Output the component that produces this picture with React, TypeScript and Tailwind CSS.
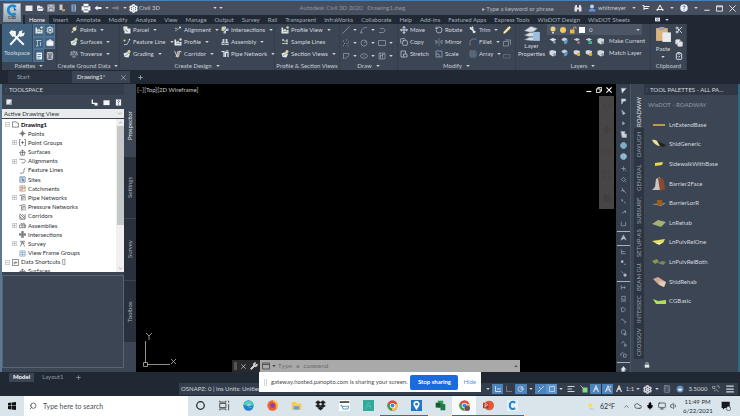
import type { ReactNode } from "react";
import clsx from "clsx";
import {
  Briefcase,
  Calculator,
  ChevronDown,
  ChevronUp,
  Circle,
  ClipboardCheck,
  Cloud,
  Copy,
  FlipHorizontal2,
  Grid3x3,
  Maximize,
  Menu,
  Mic,
  Monitor,
  Move,
  Pencil,
  RotateCw,
  Scissors,
  Search,
  Settings,
  Volume1,
  Wrench,
} from "lucide-react";

type SvgProps = { children: ReactNode; className?: string };

function Svg({ children, className = "size-2" }: SvgProps) {
  return (
    <svg
      viewBox="0 0 16 16"
      fill="none"
      stroke="currentColor"
      strokeWidth="1.6"
      className={clsx("shrink-0", className)}
      aria-hidden="true"
    >
      {children}
    </svg>
  );
}

const Arrow = () => (
  <Svg className="size-[4px] text-gray-300">
    <path d="M1 4h14l-7 8z" fill="currentColor" stroke="none" />
  </Svg>
);

const icons: Record<string, ReactNode> = {
  points: (
    <Svg>
      <path d="M3 14l1-5 4 3z" fill="#d5dae0" stroke="none" />
      <circle cx="9" cy="6" r="4" fill="#dfe0b0" stroke="none" />
      <path d="M11 2l3-1" stroke="#d8dc8e" />
    </Svg>
  ),
  surfaces: (
    <Svg>
      <path d="M1 7l8-3 5 4-3 7-8-1z" fill="#e2e6ea" stroke="none" />
      <circle cx="12" cy="3" r="3" fill="#d8dc8e" stroke="none" />
      <path d="M3 12l8-5" stroke="#808995" />
    </Svg>
  ),
  traverse: (
    <Svg>
      <path d="M1 4h14M8 1v13M3 4l-2 6h4zM13 4l-2 6h4zM4 14h8" stroke="#c4cbd4" strokeWidth="1.2" />
    </Svg>
  ),
  parcel: (
    <Svg>
      <path d="M1 1h8v4h6v10H3V9H1z" fill="#e6eaee" stroke="none" />
      <path d="M5 7l4 5" stroke="#56606f" />
      <circle cx="3" cy="3" r="2" fill="#d8dc8e" stroke="none" />
    </Svg>
  ),
  line: (
    <Svg>
      <path d="M2 13h6l5-9" stroke="#c4cbd4" />
      <circle cx="3" cy="5" r="2" fill="#d8dc8e" stroke="none" />
      <circle cx="13" cy="3" r="1.5" fill="#e6eaee" stroke="none" />
    </Svg>
  ),
  profile: (
    <Svg>
      <path d="M1 3v12h14V7l-4 2-3-4-3 4-1-6z" fill="#e6eaee" stroke="none" />
      <circle cx="13" cy="3" r="2.5" fill="#d8dc8e" stroke="none" />
      <path d="M4 12l4-2 5 2" stroke="#6d7785" />
    </Svg>
  ),
  align: (
    <Svg>
      <path d="M2 10c4-1 5-4 8-5" stroke="#aab2bd" />
      <circle cx="12" cy="3" r="2" fill="#e6eaee" stroke="none" />
      <circle cx="4" cy="5" r="1.5" fill="#d8dc8e" stroke="none" />
    </Svg>
  ),
  corridor: (
    <Svg>
      <path d="M3 14L7 2h6l-3 12z" fill="#b6ad92" stroke="none" />
      <path d="M1 2l6 13M11 2l4 2" stroke="#e6eaee" />
    </Svg>
  ),
  cross: (
    <Svg>
      <path d="M5 1h5v4h5v5h-5v5H5v-5H1V5h4z" fill="#bcc3cc" stroke="none" />
      <circle cx="4" cy="4" r="3" fill="#d8dc8e" stroke="none" />
      <path d="M4 12l8-8" stroke="#5a6473" />
    </Svg>
  ),
  assembly: (
    <Svg>
      <path d="M1 8h14v6H1zM3 2h4v6H3zM9 2h4v6H9z" fill="#c9cfd6" stroke="none" />
      <path d="M1 11h14M8 3v11" stroke="#535d6c" />
    </Svg>
  ),
  pipe: (
    <Svg>
      <path d="M1 3h5v11M9 14V5h5v9M9 2h6" stroke="#e6eaee" strokeWidth="2.4" />
    </Svg>
  ),
  sample: (
    <Svg>
      <path d="M2 11h11M6 6h8M12 2v11" stroke="#d8dde3" />
      <circle cx="4" cy="4" r="2" fill="#d8dc8e" stroke="none" />
    </Svg>
  ),
  stretch: (
    <Svg>
      <path d="M2 2h9v6M2 2v12h5M7 8h7v6H7z" stroke="#b8c0ca" />
    </Svg>
  ),
  scale: (
    <Svg>
      <path d="M2 2h12v12H2zM2 8h6v6" stroke="#8fa6bb" />
    </Svg>
  ),
  fillet: (
    <Svg>
      <path d="M2 15V9c0-4 3-7 7-7h6" stroke="#7f8a99" />
    </Svg>
  ),
  trim: (
    <Svg>
      <path d="M2 4l10 8M7 1l2 13" stroke="#e6eaee" strokeWidth="2.4" />
      <path d="M1 2l6 1-3 5zM9 10l5 1-3 4z" fill="#e6eaee" stroke="none" />
    </Svg>
  ),
  layer: (
    <Svg>
      <path d="M1 5l7-3 7 3-7 4z" fill="#dde2e7" stroke="none" />
      <path d="M7 9l6-1v5H9z" fill="#7ea7c9" stroke="none" />
    </Svg>
  ),
  layerBlue: (
    <Svg>
      <path d="M1 4l6-3 6 3-5 5-6-2z" fill="#c6d2db" stroke="none" />
      <path d="M5 8l9-3-2 8-5 2z" fill="#5e97c9" stroke="none" />
    </Svg>
  ),
  layerRed: (
    <Svg>
      <path d="M1 5l7-3 6 3-6 3z" fill="#c6d2db" stroke="none" />
      <circle cx="11" cy="11" r="3" fill="#a8787c" stroke="none" />
    </Svg>
  ),
  layerGreen: (
    <Svg>
      <path d="M1 5l7-3 6 3-6 3z" fill="#c6d2db" stroke="none" />
      <path d="M7 8h7v6H7z" fill="#3fae8a" stroke="none" />
    </Svg>
  ),
  layerLight: (
    <Svg>
      <path d="M1 4l5-2 8 2v8l-6 3-7-4z" fill="#d3d9de" stroke="none" />
      <circle cx="11" cy="11" r="3" fill="#8e9aa8" stroke="none" />
    </Svg>
  ),
  layerAmber: (
    <Svg>
      <path d="M1 4l5-2 8 2-1 5-5 3-6-2z" fill="#d3d9de" stroke="none" />
      <circle cx="11" cy="11" r="3.5" fill="#e0a840" stroke="none" />
    </Svg>
  ),
};

const dim = "size-2 text-[#8d97a5]";

const quickAccess: ReactNode[] = [
  <Svg key="new"><path d="M1 3h14v11H1z" fill="#e8ebef" stroke="none" /></Svg>,
  <Svg key="open"><path d="M2 3h5l2 2h4v3H5l-3 6zM5 9h11l-3 5H3z" fill="#e8ebef" stroke="none" /></Svg>,
  <Svg key="save"><path d="M1 1h14v14H1z" fill="#c7ccd3" stroke="none" /><path d="M4 1v5h8V1M4 15V9h8v6" stroke="#6d7683" /></Svg>,
  <Svg key="saveas"><path d="M3 1h6v11H3z" fill="#c7ccd3" stroke="none" /><path d="M8 13l6-1" stroke="#d29c4e" strokeWidth="4" /></Svg>,
  <Svg key="web"><path d="M5 1h9v14H5z" fill="#8ab0cd" stroke="none" /><path d="M7 4h5M7 8h5M7 12h5" stroke="#34404f" /></Svg>,
  <Svg key="plot" className="size-[10px]"><path d="M4 1h8v4h3v7h-3v3H4v-3H1V5h3z" fill="#f3f5f7" stroke="none" /><path d="M4 6h8M5 11h6" stroke="#5e6876" /></Svg>,
  <Svg key="undo"><path d="M7 3L1 8l6 5V10h8V6H7z" fill="#e8ebef" stroke="none" /></Svg>,
  <Arrow key="a1" />,
  <Svg key="redo" className="size-2 opacity-30"><path d="M9 3l6 5-6 5V10H1V6h8z" fill="#e8ebef" stroke="none" /></Svg>,
  <Arrow key="a2" />,
];

const menuTabs = [
  "Home", "Insert", "Annotate", "Modify", "Analyze", "View", "Manage", "Output", "Survey", "Rail",
  "Transparent", "InfraWorks", "Collaborate", "Help", "Add-ins", "Featured Apps", "Express Tools",
  "WisDOT Design", "WisDOT Sheets",
];

type Tool = { icon: ReactNode; label: string; menu?: boolean };

function ToolColumn({ tools, className }: { tools: Tool[]; className?: string }) {
  return (
    <div className={clsx("flex flex-col", className)}>
      {tools.map((tool) => (
        <button key={tool.label} className="flex h-3 items-center gap-0.5 whitespace-nowrap">
          {tool.icon}
          <span className="pr-0.5">{tool.label}</span>
          {tool.menu && <Arrow />}
        </button>
      ))}
    </div>
  );
}

type PanelProps = { title: string; menu?: boolean; className?: string; children: ReactNode };

function Panel({ title, menu, className, children }: PanelProps) {
  return (
    <section className={clsx("flex shrink-0 flex-col border-r border-[#343d4b]", className)}>
      <div className="flex h-9 flex-1">{children}</div>
      <h2 className="flex h-2 items-center justify-center gap-1 whitespace-nowrap text-[#c3cad3]">
        {title}
        {menu && <Arrow />}
      </h2>
    </section>
  );
}

const drawTools: ReactNode[] = [
  <Svg key="l" className={dim}><path d="M1 15L15 1" /></Svg>,
  <Svg key="a" className={dim}><path d="M2 15C2 6 6 3 14 3" /><circle cx="3" cy="13" r="1.5" /></Svg>,
  <Svg key="p" className={dim}><path d="M2 13h8c5 0 5-8 0-8H4" /></Svg>,
  <Svg key="s" className={dim}><path d="M2 4h2M8 2h2M12 6h2M4 9h2M9 9h2M2 13h2M11 14h2" strokeWidth="2" /></Svg>,
  <Svg key="c" className={dim}><circle cx="8" cy="8" r="6" /><path d="M8 8l4-4" /></Svg>,
  <Svg key="r" className={dim}><path d="M1 3h14v10H1z" /></Svg>,
  <Svg key="n" className={dim}><path d="M3 14V3h11c0 6-4 9-9 10" /></Svg>,
  <Svg key="e" className={dim}><ellipse cx="8" cy="8" rx="7" ry="4.5" /><path d="M8 7v2" /></Svg>,
  <Svg key="h" className={dim}><path d="M2 2h12v12H2zM5 2v12M9 2v12M2 9l12-5" /></Svg>,
];

function Ribbon() {
  return (
    <div className="flex h-[46px] shrink-0 bg-[#202834] pl-0.5 text-[#d3d8df]">
      <div className="flex bg-[#3c4554]">
        <Panel title="Palettes" menu className="w-[55px]">
          <button className="flex w-[30px] flex-col items-center justify-center gap-0.5 bg-[#41627f]">
            <Svg className="size-[18px] text-gray-100">
              <path d="M4 4l10 10M12 3L2 14" strokeWidth="1.8" />
              <path d="M1 3l2-2 4 1 0 3-3 2zM10 2l3-1-1 3 3-1-1 3-3 1-2-2z" fill="currentColor" stroke="none" />
            </Svg>
            Toolspace
          </button>
          <div className="ml-px grid grid-cols-2 text-gray-100">
            {[
              icons.profile,
              <Settings key="s" className="size-2" strokeWidth={3} />,
              <Svg key="t"><path d="M2 3h11M5 3v11M11 6v8M2 14h5" stroke="#bcd0e2" /></Svg>,
              <Briefcase key="b" className="size-2 fill-gray-100 text-gray-300" />,
              <Svg key="d"><path d="M3 1h11v14H3z" fill="#eef1f4" stroke="none" /><path d="M5 5h7M5 9h7M5 12h4" stroke="#58789a" /></Svg>,
              <Calculator key="c" className="size-2 text-gray-300" strokeWidth={3} />,
            ].map((icon, i) => (
              <button
                key={i}
                className={clsx(
                  "flex w-[11px] items-center justify-center",
                  i < 5 && "border border-[#4f7496] bg-[#41627f]",
                )}
              >
                {icon}
              </button>
            ))}
          </div>
        </Panel>
        <Panel title="Create Ground Data" menu className="w-[63px]">
          <ToolColumn
            className="pl-[13px]"
            tools={[
              { icon: icons.points, label: "Points", menu: true },
              { icon: icons.surfaces, label: "Surfaces", menu: true },
              { icon: icons.traverse, label: "Traverse", menu: true },
            ]}
          />
        </Panel>
        <Panel title="Create Design" menu className="w-[155px]">
          <ToolColumn
            className="w-[54px] pl-[3px]"
            tools={[
              { icon: icons.parcel, label: "Parcel", menu: true },
              { icon: icons.line, label: "Feature Line", menu: true },
              { icon: icons.surfaces, label: "Grading", menu: true },
            ]}
          />
          <ToolColumn
            className="w-[47px]"
            tools={[
              { icon: icons.align, label: "Alignment", menu: true },
              { icon: icons.profile, label: "Profile", menu: true },
              { icon: icons.corridor, label: "Corridor", menu: true },
            ]}
          />
          <ToolColumn
            className="w-[53px]"
            tools={[
              { icon: icons.cross, label: "Intersections", menu: true },
              { icon: icons.assembly, label: "Assembly", menu: true },
              { icon: icons.pipe, label: "Pipe Network", menu: true },
            ]}
          />
        </Panel>
        <Panel title="Profile & Section Views" className="w-[65px]">
          <ToolColumn
            className="pl-[6px]"
            tools={[
              { icon: icons.profile, label: "Profile View", menu: true },
              { icon: icons.sample, label: "Sample Lines" },
              { icon: icons.surfaces, label: "Section Views", menu: true },
            ]}
          />
        </Panel>
        <Panel title="Draw" menu className="w-[58px]">
          <div className="grid grid-cols-3 pl-0.5">
            {drawTools.map((tool, i) => (
              <button key={i} className="flex w-[18px] items-center gap-[3px]">
                {tool}
                {i !== 2 && <Arrow />}
              </button>
            ))}
          </div>
        </Panel>
        <Panel title="Modify" menu className="w-[118px]">
          <ToolColumn
            className="w-[36px] pl-[2px]"
            tools={[
              { icon: <Move className="size-2" strokeWidth={3} />, label: "Move" },
              { icon: <Copy className="size-2" />, label: "Copy" },
              { icon: icons.stretch, label: "Stretch" },
            ]}
          />
          <ToolColumn
            className="w-[34px] pl-[1px]"
            tools={[
              { icon: <RotateCw className="size-2 -scale-x-100" />, label: "Rotate" },
              { icon: <FlipHorizontal2 className="size-2 text-[#9aa7b6]" />, label: "Mirror" },
              { icon: icons.scale, label: "Scale" },
            ]}
          />
          <ToolColumn
            className="w-[35px] pl-[1px]"
            tools={[
              { icon: icons.trim, label: "Trim", menu: true },
              { icon: icons.fillet, label: "Fillet", menu: true },
              { icon: <Grid3x3 className="size-2 text-[#71839a]" />, label: "Array", menu: true },
            ]}
          />
          <div className="flex flex-col justify-around">
            <Pencil className="size-2 fill-amber-100 text-amber-200" />
            <Svg><path d="M1 5h10v9H1zM4 2h11v9" stroke="#8d97a5" /></Svg>
            <Svg className="size-2 opacity-50"><path d="M1 5h13v7H1z" stroke="#8d97a5" /></Svg>
          </div>
        </Panel>
        <Panel title="Layers" menu className="w-[135px]">
          <button className="flex w-[31px] flex-col items-center text-center leading-[8px]">
            <Svg className="size-[18px]">
              <path d="M1 6l6-4 6 2-5 4zM1 10l6-3 6 1-5 4zM1 14l6-3 6 1-5 3z" fill="#d9dee3" stroke="#5b6573" strokeWidth=".5" />
              <path d="M9 7h6v8H9z" fill="#9cc0dc" stroke="none" />
            </Svg>
            Layer Properties
          </button>
          <div className="flex flex-1 flex-col">
            <div className="mr-2 flex h-[11px] items-center gap-0.5 bg-[#4c5665] px-0.5">
              <Svg><circle cx="8" cy="6" r="5" fill="#f1d480" stroke="none" /><path d="M6 12h4v3H6z" fill="#cfd4da" stroke="none" /></Svg>
              <Svg><circle cx="8" cy="8" r="6" fill="#f1cc62" stroke="none" /></Svg>
              <Svg><path d="M2 7h9v8H2z" fill="#e9b94e" stroke="none" /><path d="M9 7V4c0-3 5-3 5 0v2" stroke="#e9b94e" /></Svg>
              <span className="size-[6px] bg-white" />
              <select aria-label="Layer" className="min-w-0 flex-1 appearance-none bg-transparent pl-0.5">
                <option>0</option>
              </select>
              <Arrow />
            </div>
            <div className="flex h-3 items-center gap-1 pl-0.5">
              {icons.layer}
              {icons.layerBlue}
              {icons.layerRed}
              {icons.layerGreen}
              {icons.layerLight}
              <span className="whitespace-nowrap">Make Current</span>
            </div>
            <div className="flex h-3 items-center gap-1 pl-0.5">
              {icons.layerLight}
              {icons.layerBlue}
              {icons.layerAmber}
              {icons.layerAmber}
              {icons.layerLight}
              <span className="whitespace-nowrap">Match Layer</span>
            </div>
          </div>
        </Panel>
        <Panel title="Clipboard" className="w-[36px]">
          <button className="flex w-6 flex-col items-center pt-0.5">
            <Svg className="mb-0.5 size-[17px]">
              <path d="M1 2h11v12H1z" fill="#d9b47c" stroke="none" />
              <path d="M4 1h5v3H4z" fill="#9ba3ad" stroke="none" />
              <path d="M7 6h8v9H7z" fill="#e8ebef" stroke="none" />
            </Svg>
            Paste
            <span className="mt-0.5"><Arrow /></span>
          </button>
          <div className="flex flex-col justify-around text-gray-300">
            <Scissors className="size-2" strokeWidth={3} />
            <Copy className="size-2 fill-gray-200" />
            <ClipboardCheck className="size-2" strokeWidth={3} />
          </div>
        </Panel>
      </div>
    </div>
  );
}

function Header() {
  return (
    <header className="flex h-6 shrink-0 border-t border-[#4480bb] bg-[#202834]">
      <div className="flex w-[23px] shrink-0 bg-[#444e5e] pl-[3px] pt-0.5">
        <button className="flex h-[19px] w-[18px] flex-col items-center border border-[#8e9aa8] bg-gradient-to-b from-[#d3e0e8] to-[#8e9dab]" aria-label="Civil 3D menu">
          <Svg className="h-[12px] w-[14px]">
            <path d="M13 4C9 0 3 3 3 8c0 5 5 8 10 5" stroke="#2286c8" strokeWidth="3.5" />
            <path d="M10 4l4 4-3 1z" fill="#125f9c" stroke="none" />
          </Svg>
          <span className="text-[4px] font-bold leading-[4px] text-[#26303c]">C3D</span>
        </button>
      </div>
      <div className="flex min-w-0 flex-1 flex-col">
        <div className="flex h-[14px] items-center bg-[#444e5e] text-[#c2c9d2]">
          <div className="flex w-[104px] items-center justify-between pl-0.5">{quickAccess}</div>
          <div className="flex w-[96px] items-center justify-between pl-0.5">
            <span className="flex items-center gap-px">
              <Settings className="size-[9px] text-gray-100" strokeWidth={4} />
              Civil 3D
            </span>
            <span className="flex gap-0.5"><Arrow /><Arrow /></span>
          </div>
          <h1 className="flex-1 whitespace-pre text-center text-[#8b95a2]">
            Autodesk Civil 3D 2020   Drawing1.dwg
          </h1>
          <input
            type="search"
            aria-label="Search help"
            placeholder="▸ Type a keyword or phrase"
            className="w-[92px] text-[6px] leading-none placeholder:text-[#b3bbc5]"
          />
          <div className="flex w-[166px] items-center justify-between pr-1 text-gray-100">
            <Svg><path d="M1 15V7l2-5h3v5h4V2h3l2 5v8h-5v-4H6v4z" fill="#e0e4e9" stroke="none" /></Svg>
            <span className="flex items-center gap-0.5 text-[#c2c9d2]">
              <Svg><circle cx="8" cy="5" r="4" fill="#b9d0f0" stroke="none" /><path d="M1 15c0-8 14-8 14 0z" fill="#5d93e0" stroke="none" /></Svg>
              whitmeyer
            </span>
            <Arrow />
            <Svg><path d="M1 3h3v9M4 5h11M4 9h9" strokeWidth="2" /></Svg>
            <Svg><path d="M2 14L8 2l6 12M1 11h14" strokeWidth="2" /></Svg>
            <Arrow />
            <Svg><circle cx="8" cy="8" r="7.5" fill="#e6f0f6" stroke="none" /><path d="M6 6c0-3 5-3 4 0-1 2-2 1-2 4M8 11v2" stroke="#2b5f8c" /></Svg>
            <Arrow />
            <button aria-label="Minimize"><Svg className="size-[6px]"><path d="M1 14h14" strokeWidth="2.5" /></Svg></button>
            <button aria-label="Restore"><Svg className="size-[7px]"><path d="M1 2h14v12H1zM1 4h14" strokeWidth="2" /></Svg></button>
            <button aria-label="Close"><Svg className="size-[7px]"><path d="M1 1l14 14M15 1L1 15" strokeWidth="2" /></Svg></button>
          </div>
        </div>
        <nav className="flex h-[9px] items-center pl-0.5 text-[#a4adb8]">
          {menuTabs.map((tab) => (
            <a
              key={tab}
              href="#"
              className={clsx("whitespace-nowrap px-1 leading-[9px]", tab === "Home" && "bg-[#3c4554] text-gray-100")}
            >
              {tab}
            </a>
          ))}
          <span className="ml-5 flex items-center gap-1">
            <Svg className="h-[5px] w-[7px]"><path d="M0 2h16v12H0z" fill="#e6eaee" stroke="none" /><circle cx="8" cy="8" r="3" stroke="#3c4554" /></Svg>
            <Arrow />
          </span>
        </nav>
      </div>
    </header>
  );
}

type TreeItem = { label: string; level: number; toggle?: boolean; d: string; color?: string };

const tree: TreeItem[] = [
  { label: "Drawing1", level: 0, toggle: true, d: "M1 14V2h9l2 3h3v9z" },
  { label: "Points", level: 1, d: "M8 1v14M1 8h14M5 5h6v6H5z" },
  { label: "Point Groups", level: 1, toggle: true, d: "M4 1H1v14h3M12 1h3v14h-3M8 4v8M4 8h8" },
  { label: "Surfaces", level: 1, d: "M2 8l6-6 6 6-2 6H4zM2 8h12M8 2v12" },
  { label: "Alignments", level: 1, toggle: true, d: "M1 3h9c6 0 6 8 0 8H6" },
  { label: "Feature Lines", level: 1, d: "M2 14h6c3 0 4-4 3-7l3-5" },
  { label: "Sites", level: 1, d: "M2 2h12v12H2zM5 3l6 9M3 9h9M9 3v10", color: "text-[#3f6f9c]" },
  { label: "Catchments", level: 1, d: "M2 2h12v12H2zM2 6h12M7 2v12M2 11l12-4", color: "text-[#b58a6d]" },
  { label: "Pipe Networks", level: 1, toggle: true, d: "M1 3h5v12M9 15V6h5v9M7 2h8" },
  { label: "Pressure Networks", level: 1, d: "M1 3h5v12M9 15V6h5v9M7 2h8" },
  { label: "Corridors", level: 1, d: "M2 2v12h12V2M3 3l10 10M7 2l7 8M2 8l6 6" },
  { label: "Assemblies", level: 1, toggle: true, d: "M1 7h14v6H1zM4 3h3v9M9 3h3v9" },
  { label: "Intersections", level: 1, d: "M6 1h4v5h5v4h-5v5H6v-5H1V6h5zM8 2v12M2 8h12" },
  { label: "Survey", level: 1, toggle: true, d: "M2 3h12M8 4L3 15M8 4l5 11M4 7h9" },
  { label: "View Frame Groups", level: 1, d: "M2 2h12v12H2zM2 6h12M2 10h12M8 2v12", color: "text-[#7ba3c0]" },
  { label: "Data Shortcuts []", level: 0, toggle: true, d: "M1 1h14v14H1zM5 12V8h6M8 5l3 3-3 3" },
  { label: "Surfaces", level: 1, d: "M2 8l6-6 6 6-2 6H4zM2 8h12M8 2v12" },
];

function Toolspace() {
  return (
    <aside className="flex w-[134px] shrink-0 bg-[#3c4554]">
      <div className="flex w-[122px] flex-col">
        <h2 className="flex h-[11px] shrink-0 items-center gap-0.5 bg-[#343d4b] pl-[3px] text-[#d3d8df]">
          <span className="text-[#7d8896]">⁝</span>TOOLSPACE
        </h2>
        <div className="flex h-[14px] shrink-0 items-center gap-1 pl-1 pr-0.5 text-gray-100">
          <button className="mr-auto" aria-label="Item"><Svg className="size-[6px]"><path d="M1 1h14v14H1z" fill="#e6eaee" stroke="none" /><path d="M8 15l7-7" stroke="#3c4554" /></Svg></button>
          <button aria-label="Link"><Svg className="size-[7px]"><path d="M3 1v9h10" strokeWidth="3" /><path d="M8 9h7v6H8z" fill="currentColor" stroke="none" /></Svg></button>
          <button className="mx-px" aria-label="Panorama"><Svg className="size-[7px]"><path d="M1 3h14v11H1z" fill="currentColor" stroke="none" /></Svg></button>
          <button aria-label="Help"><Svg className="size-[7px]"><path d="M2 1h12v14H2z" fill="currentColor" stroke="none" /><path d="M6 6c0-3 5-3 4 0-1 2-2 1-2 4M8 11v2" stroke="#3c4554" /></Svg></button>
        </div>
        <div className="relative h-[9px] shrink-0 bg-[#e9ebec]">
          <select aria-label="View" className="block h-[9px] w-full appearance-none pl-0.5 leading-[9px] text-[#30353b]">
            <option>Active Drawing View</option>
          </select>
          <ChevronDown className="pointer-events-none absolute right-0.5 top-0.5 size-[5px] text-gray-600" />
        </div>
        <div className="mt-px flex h-[153px] shrink-0 overflow-hidden bg-white">
          <ul className="grid h-[157px] flex-1 auto-rows-fr pl-[3px] pt-px text-[#2f3338]">
            {tree.map((item, i) => (
              <li key={i} className={clsx("flex items-center gap-0.5", item.level === 1 && "pl-[7px]")}>
                <span className="flex size-[5px] shrink-0 items-center justify-center">
                  {item.toggle && (
                    <Svg className="size-[5px] text-[#8b9198]">
                      <path d={item.level ? "M1 1h14v14H1zM8 3v10M3 8h10" : "M1 1h14v14H1zM3 8h10"} />
                    </Svg>
                  )}
                </span>
                <Svg className={clsx("size-[7px]", item.color ?? "text-[#565b61]")}>
                  <path d={item.d} />
                </Svg>
                <span className={clsx("whitespace-nowrap", i === 0 && "font-bold text-black")}>{item.label}</span>
              </li>
            ))}
          </ul>
          <div className="flex w-2 flex-col items-center justify-between bg-[#f0f0f0] text-gray-600">
            <ChevronUp className="my-px size-[5px]" />
            <span className="mb-auto h-[99px] w-[7px] bg-[#c6c7c8]" />
            <ChevronDown className="my-px size-[5px]" />
          </div>
        </div>
        <div className="mb-1 mt-[3px] flex-1 border border-[#596473]" />
      </div>
      <div className="flex flex-1 flex-col pt-[11px] text-[#a8b0bb]">
        {["Prospector", "Settings", "Survey", "Toolbox"].map((tab, i) => (
          <button
            key={tab}
            className={clsx(
              "flex h-[62px] rotate-180 items-center justify-center [writing-mode:vertical-rl]",
              i === 0 ? "bg-[#3c4554] text-gray-200" : "border-t border-[#3c4554] bg-[#29313e]",
            )}
          >
            {tab}
          </button>
        ))}
      </div>
    </aside>
  );
}

function Canvas() {
  return (
    <main className="relative flex-1 bg-black text-[#c9c9c9]">
      <p className="pl-px pt-0.5">[−][Top][2D Wireframe]</p>
      <div className="absolute right-1 top-[3px] flex gap-[4px] text-white">
        <button aria-label="Minimize drawing"><Svg className="size-[6px]"><path d="M1 12h13" strokeWidth="3" /></Svg></button>
        <button aria-label="Restore drawing"><Svg className="size-[6px]"><path d="M1 5h10v10H1zM5 5V1h10v10h-4" strokeWidth="2.4" /></Svg></button>
        <button aria-label="Close drawing"><Svg className="size-[6px]"><path d="M1 1l14 14M15 1L1 15" strokeWidth="3" /></Svg></button>
      </div>
      <div className="absolute right-0.5 top-3 h-[113px] w-[15px] bg-[#474644]">
        <div className="flex h-full flex-col items-center justify-around text-[#3f3e3d]">
          <Circle className="size-2" />
          <Move className="size-2" />
          <Search className="size-2" />
          <Maximize className="size-2" />
          <Grid3x3 className="size-2" />
        </div>
      </div>
      <svg className="absolute bottom-1 left-[6px] h-9 w-9" viewBox="0 0 36 36" fill="none" stroke="#b9b6a4" aria-hidden="true">
        <path d="M1.5 30.5h4v4h-4zM3.5 31V9M5 32.5h23" strokeWidth=".8" />
        <path d="M4 1l3 3 3-3M7 4v4M29 27l5 5M34 27l-5 5" strokeWidth=".8" />
      </svg>
      <div className="absolute bottom-0 left-24 right-24 flex h-3 bg-[#a9a9a9] font-['Liberation_Mono',monospace]">
        <div className="flex w-7 items-center justify-around bg-[#292a2c] text-gray-200">
          <span className="h-2 w-[3px] bg-[#555]" />
          <Svg className="size-[5px]"><path d="M1 1l14 14M15 1L1 15" strokeWidth="2" /></Svg>
          <Wrench className="size-2 fill-gray-300" />
        </div>
        <label className="flex flex-1 items-center gap-0.5 px-0.5">
          <Svg className="size-2 text-[#555]"><path d="M1 2h14v12H1zM1 5h14" strokeWidth="2" /></Svg>
          <Svg className="size-[4px] text-[#444]"><path d="M1 4h14l-7 8z" fill="currentColor" stroke="none" /></Svg>
          <input aria-label="Command line" placeholder="Type a command" className="flex-1 text-[6px] leading-none placeholder:text-[#6b6b6b]" />
          <Svg className="size-[4px] text-[#555]"><path d="M1 12h14L8 4z" fill="currentColor" stroke="none" /></Svg>
        </label>
      </div>
    </main>
  );
}

type Strip = { d: string; fill?: string; rule?: boolean };

const strip: Strip[] = [
  { d: "M3 3h11L5 14z", fill: "#e6eaee" },
  { d: "M3 2h10v5H8l-4 7z", fill: "#dfe4e9" },
  { d: "M4 3l8 7-5 3z", fill: "#b7c0ca" },
  { d: "M6 4l5 4-5 3z", fill: "#97a3b1" },
  { d: "M2 1h9v6h4v8H5z", fill: "#cdd3d9" },
  { d: "M8 1a7 7 0 1 0 .1 0zM2 6h12M8 1v14", fill: "#67b3df" },
  { d: "M8 1a7 7 0 1 0 .1 0zM3 11h10M8 1v14", fill: "#80c4ea" },
  { d: "M3 8h10M8 3v10M11 10l3 4" },
  { d: "M3 8l5-5 5 5-5 5zM11 11l3 3" },
  { d: "M5 2l3 9M2 9l8-2M9 9l5 5" },
  { d: "M2 4l5 2M6 3l-1 5M9 9l5 3" },
  { d: "M4 10l8-5M9 5h4v4", fill: "#71a3bd" },
  { d: "M3 4v9h10V4" },
  { d: "M2 14L8 2l6 12-5-4zM8 2v8", fill: "#e6eaee", rule: true },
  { d: "M3 3v10h10M3 8h8", rule: true },
  { d: "M3 4h4v4H3zM9 12h5", fill: "#e6eaee" },
  { d: "M3 3l5 5M9 9h5v5H9z", fill: "#c4ccd4" },
  { d: "M3 3v10M3 8h10M10 5v6", rule: true },
  { d: "M4 3h8v8H4zM2 14h12" },
  { d: "M3 4h6l4 4-4 5H4z" },
  { d: "M2 5l4-3 3 5 5 2-4 4" },
  { d: "M8 2a5 5 0 1 0 .1 0zM10 10h4v4h-4z" },
  { d: "M3 8l4-5 4 5M10 10h4v4h-4z" },
  { d: "M2 12V6l6-3M8 7h6v7H8z" },
  { d: "M2 10l6-7 6 7h-3v5H4v-5z", fill: "#e6eaee", rule: true },
];

const paletteTabs = ["ROADWAY", "DAYLIGH", "GENERAL", "SUBSURF.", "SETUP-AS", "BEAM GU.", "INTERSEC", "CROSSOV"];

const paletteItems: { label: string; art: ReactNode }[] = [
  { label: "LnExtendBase", art: <path d="M1 6h12v2H1z" fill="#b99a4c" /> },
  { label: "ShldGeneric", art: <><path d="M0 3c4-1 6 1 9 6-4 0-7-2-9-6z" fill="#e9e3a0" /><path d="M5 4l9 4-2 2-4-1z" fill="#24221b" /></> },
  { label: "SidewalkWithBase", art: <path d="M3 6l8-1-1 3-7 1z" fill="#e8d94f" /> },
  { label: "Barrier2Face", art: <><path d="M0 13l3-3 1-8 4-2v13z" fill="#c9c5c1" /><path d="M6 1l4 0 2 3 1 8-5 2z" fill="#8a4a32" /></> },
  { label: "BarrierLorR", art: <><path d="M0 8l14-1-5 3z" fill="#9aa07e" /><path d="M5 4h5l1 5H5z" fill="#9c5c20" /></> },
  { label: "LnRehab", art: <path d="M0 8l6-4 8 2-5 5z" fill="#a2b077" /> },
  { label: "LnPulvRelOne", art: <><path d="M0 6l13-2-2 4-6 1z" fill="#e6e06a" /><path d="M4 8l6 0-3 2z" fill="#fffbc4" /></> },
  { label: "LnPulvRelBoth", art: <><path d="M0 6l5-2 2 3-4 2z" fill="#8a9656" /><path d="M6 8l4-2 4 1-3 3z" fill="#7b8a54" /></> },
  { label: "ShldRehab", art: <><path d="M1 4l5-2 8 5-2 5-5-2z" fill="#cfa896" /><path d="M7 6l7 1-2 5-4-2z" fill="#e6cabb" /></> },
  { label: "CGBasic", art: <path d="M1 5l5 2 8-1v4l-10 0z" fill="#b4dc5c" /> },
];

function ToolPalettes() {
  return (
    <aside className="flex w-[122px] shrink-0 bg-[#3c4554]">
      <div className="flex w-[15px] flex-col items-center justify-between overflow-hidden border-r border-[#4b5665] bg-[#343e4d] pt-[3px] text-[#9aa5b2]">
        {strip.map((tool, i) => (
          <button key={i} aria-label={`Tool ${i + 1}`} className={clsx("px-[3px]", tool.rule && "border-t border-[#aab3be] pt-0.5")}>
            <Svg className="size-[7px]">
              <path d={tool.d} fill={tool.fill ?? "none"} />
            </Svg>
          </button>
        ))}
      </div>
      <div className="ml-[3px] flex w-[10px] flex-col pt-[11px] text-[#9aa4b0]">
        {paletteTabs.map((tab, i) => (
          <button
            key={tab}
            className={clsx(
              "flex h-[33px] rotate-180 items-center justify-center whitespace-nowrap [writing-mode:vertical-rl]",
              i === 0 ? "text-gray-200" : "bg-[#2d3542]",
            )}
          >
            {tab}
          </button>
        ))}
      </div>
      <div className="flex flex-1 flex-col">
        <h2 className="flex h-[11px] items-center gap-0.5 whitespace-nowrap bg-[#2f3744] pl-0.5 text-[#d3d8df]">
          <span className="text-[#7d8896]">⁝</span>TOOL PALETTES - ALL PA...
        </h2>
        <h3 className="flex h-5 items-center pl-1 text-[#929ca9]">WisDOT - ROADWAY</h3>
        <ul className="grid h-[196px] auto-rows-fr pl-2 text-[#d3d8df]">
          {paletteItems.map((item) => (
            <li key={item.label} className="flex items-center gap-[3px]">
              <svg viewBox="0 0 14 14" className="size-[14px]" aria-hidden="true">{item.art}</svg>
              {item.label}
            </li>
          ))}
        </ul>
        <Svg className="mb-1 mt-auto size-[6px] text-gray-200">
          <path d="M2 7h12v8H2z" fill="currentColor" stroke="none" />
          <path d="M5 7V2h6v5" />
        </Svg>
      </div>
    </aside>
  );
}

const Person = ({ open = false }: { open?: boolean }) => (
  <Svg><path d={open ? "M3 14L8 2l5 12M12 2l2 3M8 8v3" : "M3 14L8 2l5 12M8 5v5"} strokeWidth="2.4" /></Svg>
);

const statusCells: { className: string; content: ReactNode }[] = [
  { className: "w-2", content: <Arrow /> },
  { className: "w-[11px] bg-[#4b84bd]", content: <Svg><path d="M3 2v11h11M6 8h8" strokeWidth="2" /></Svg> },
  { className: "w-3 text-[#7f8a98]", content: <Svg><path d="M3 2v11h11" /></Svg> },
  { className: "w-3 bg-[#4b84bd]", content: <Svg><circle cx="7" cy="8" r="5" /><path d="M7 8h7M7 8l4-5" /></Svg> },
  { className: "w-2", content: <Arrow /> },
  { className: "w-[11px] bg-[#4b84bd]", content: <Svg><path d="M2 14L14 2M4 4l3 3" /></Svg> },
  { className: "w-[11px] bg-[#5a92c9]", content: <Svg><path d="M3 3h10v10H3z" /></Svg> },
  { className: "w-2", content: <Arrow /> },
  { className: "w-3", content: <Svg><path d="M1 3h14M1 8h9M1 13h14" strokeWidth="2" /></Svg> },
  { className: "w-[13px]", content: <Svg><path d="M5 5h10v10H5z" fill="#7ddb8b" stroke="none" /><path d="M1 1l5 5" /></Svg> },
  { className: "w-[11px] bg-[#4b84bd]", content: <Person /> },
  { className: "w-3 border-l border-[#2a3340] bg-[#4b84bd]", content: <Person open /> },
  { className: "w-3", content: <Person /> },
  { className: "w-4 gap-0.5", content: <>1:1<Arrow /></> },
  { className: "w-3", content: <Settings className="size-[9px]" strokeWidth={4} /> },
  { className: "w-2", content: <Arrow /> },
  { className: "w-3 text-[#98a2af]", content: <Calculator className="size-2" /> },
  { className: "w-[14px]", content: <Svg><circle cx="8" cy="8" r="7" fill="#5b8fbf" stroke="none" /><path d="M3 9l5-3 5 3-5 4z" fill="#d7e6f2" stroke="none" /></Svg> },
  { className: "w-[22px]", content: "3.5000" },
  { className: "w-[13px] text-[#98a2af]", content: <Svg><path d="M1 3h5v4H1zM9 2h5v5M4 12l5-3 4 5" /></Svg> },
  { className: "w-4", content: <Menu className="size-[10px]" strokeWidth={3} /> },
];

const taskApps: { name: string; open?: boolean; active?: boolean; art: ReactNode }[] = [
  { name: "Cortana", art: <circle cx="8" cy="8" r="5.5" fill="none" stroke="#222" strokeWidth="1.8" /> },
  { name: "Task View", art: <path d="M1 5h9v6H1zM1 1v2h9V1M1 15v-2h9v2M14 1v3M14 6v9" fill="none" stroke="#333" strokeWidth="1.2" /> },
  { name: "Edge", art: <><circle cx="8" cy="8" r="7.5" fill="#1f7fd0" /><path d="M1 7c1-7 14-9 14 1H7c0 3 4 4 7 3" fill="#4fd0b8" /><path d="M6 8c1-3 5-2 5 0z" fill="#dbe7ec" /></> },
  { name: "Firefox", art: <><circle cx="8" cy="8" r="7.5" fill="#f0632a" /><path d="M9 1c6 2 7 8 5 11" stroke="#fbc53a" strokeWidth="2.5" fill="none" /><circle cx="8" cy="8" r="3.5" fill="#8b3fb8" /></> },
  { name: "File Explorer", art: <><path d="M1 3h6l1 2h7v9H1z" fill="#f5cb56" /><path d="M4 9h8v5H4z" fill="#5ca5d6" /></> },
  { name: "Dropbox", art: <path d="M4.5 1L8 3.5 4.5 6 1 3.5zM11.500 1L15 3.500 11.500 6 8 3.500zM4.500 6L8 8.500 4.500 11 1 8.500zM11.500 6L15 8.500 11.500 11 8 8.500zM8 9.500l3.500 2.500L8 14.500 4.500 12z" fill="#1b1b1b" stroke="#1b1b1b" /> },
  { name: "Amazon", art: <><path d="M0 0h16v16H0z" fill="#fff" /><path d="M1 3h14" stroke="#444" strokeWidth="2.5" /><path d="M2 8h2l2 5h7l1-4H5" stroke="#5d9fc4" fill="none" strokeWidth="1.5" /></> },
  { name: "Lizard", art: <><path d="M0 0h16v16H0z" fill="#33a999" /><path d="M4 13l4-10 4 10M5 9h6" fill="none" stroke="#5fc2b3" /></> },
  { name: "Chrome", open: true, art: <><circle cx="8" cy="8" r="7.5" fill="#e2493b" /><path d="M8 8L1 5c-2 6 3 11 7 10z" fill="#36a552" /><path d="M8 8l7-3c2 6-3 11-8 10z" fill="#f6cb3e" /><circle cx="8" cy="8" r="3.8" fill="#fff" /><circle cx="8" cy="8" r="2.8" fill="#4382ee" /></> },
  { name: "Maps", open: true, art: <><path d="M0 0h16v16H0z" fill="#2276c4" /><path d="M8 15L4 8a4.500 4.500 0 1 1 8 0z" fill="#fff" /><circle cx="8" cy="6" r="2" fill="#2276c4" /></> },
  { name: "Project", art: <><path d="M4 1h8v10H4z" fill="#2f9a5c" /><path d="M8 6h7v9H8z" fill="#1f7b47" /><path d="M1 4h7v7H1z" fill="#145c34" /></> },
  { name: "Chrome meeting", open: true, active: true, art: <><circle cx="8" cy="8" r="7.5" fill="#e2493b" /><path d="M8 8L1 5c-2 6 3 11 7 10z" fill="#36a552" /><path d="M8 8l7-3c2 6-3 11-8 10z" fill="#f6cb3e" /><circle cx="8" cy="8" r="4" fill="#fff" /><circle cx="8" cy="8" r="3" fill="#4382ee" /><circle cx="12" cy="12" r="4" fill="#6b5561" /></> },
  { name: "PowerPoint", open: true, art: <><circle cx="9" cy="8" r="7" fill="#e2583a" /><path d="M0 4h8v8H0z" fill="#b7351c" /><path d="M3 11V5.5h2c2 0 2 3 0 3H3" stroke="#fff" fill="none" /></> },
  { name: "Civil 3D", open: true, art: <><path d="M0 0h16v16H0z" fill="#e5f2f8" /><path d="M12 4C8 1 4 3 4 8s4 6 8 4" stroke="#2286c8" strokeWidth="3" fill="none" /></> },
];

function Taskbar() {
  return (
    <footer className="flex h-5 shrink-0 items-stretch bg-[#d9e5ea] text-[#2a2f35]">
      <button aria-label="Start" className="flex w-6 items-center justify-center">
        <Svg><path d="M0 2l7-1v6H0zM8 1l8-1v7H8zM0 8h7v7l-7-1zM8 8h8v8l-8-1z" fill="#111" stroke="none" /></Svg>
      </button>
      <label className="flex w-[164px] items-center gap-[6px] bg-white pl-[5px]">
        <Search className="size-2 -scale-x-100" />
        <input placeholder="Type here to search" className="min-w-0 flex-1 text-[7px] placeholder:text-[#4a4f55]" />
      </label>
      <div className="flex">
        {taskApps.map((app) => (
          <button
            key={app.name}
            aria-label={app.name}
            className={clsx(
              "flex w-6 items-center justify-center border-b",
              app.open ? "border-[#1b74c5]" : "border-transparent",
              app.active && "bg-[#f6fafb]",
            )}
          >
            <svg viewBox="0 0 16 16" className="size-[11px]" aria-hidden="true">{app.art}</svg>
          </button>
        ))}
      </div>
      <div className="ml-auto flex items-center gap-1 pr-[9px]">
        <Svg className="size-[9px]"><circle cx="6" cy="6" r="4" fill="#f7dc73" stroke="none" /><path d="M3 14c0-5 10-5 12 0z" fill="#c4d6e4" stroke="none" /></Svg>
        <span className="mr-1 text-[7px]">62°F</span>
        <ChevronUp className="size-[7px]" />
        <Cloud className="size-2" />
        <Mic className="size-2 fill-black text-black" />
        <Monitor className="size-2" />
        <Volume1 className="size-2" />
        <time className="mr-[5px] ml-px w-[29px] text-center leading-[9px]">11:49 PM 6/22/2021</time>
        <button aria-label="Notifications">
          <Svg className="size-[10px]"><path d="M1 1h13v10H6l-3 3v-3H1z" fill="#15181c" stroke="none" /><circle cx="12" cy="12" r="3.5" fill="#d9e5ea" stroke="#333" strokeWidth="1" /></Svg>
        </button>
      </div>
    </footer>
  );
}

export default function App() {
  return (
    <div className="relative flex h-screen flex-col overflow-hidden bg-[#202834] font-['Lato','Open_Sans',sans-serif] text-[6px] leading-[8px]">
      <Header />
      <Ribbon />
      <nav className="flex h-[14px] shrink-0 items-center pl-2 text-[#9ba5b1]">
        <button className="flex h-3 w-[64px] items-center bg-[#2a323f] pl-[9px]">Start</button>
        <button className="flex h-3 w-[58px] items-center justify-between bg-[#3c4554] pl-[5px] pr-1 text-gray-200">
          Drawing1*
          <Svg className="size-[5px]"><path d="M1 1l14 14M15 1L1 15" /></Svg>
        </button>
        <button aria-label="New drawing" className="ml-1 flex h-3 w-3 items-center justify-center">
          <Svg className="size-[5px]"><path d="M8 1v14M1 8h14" strokeWidth="3" /></Svg>
        </button>
      </nav>
      <div className="flex min-h-0 flex-1 border-l-2 border-r-2 border-l-[#5d7891] border-r-[#2b6a86]">
        <Toolspace />
        <Canvas />
        <ToolPalettes />
      </div>
      <nav className="flex h-[10px] shrink-0 items-center pl-[9px] text-[#8e98a5]">
        <button className="h-[9px] bg-[#3c4554] px-1 font-bold text-white">Model</button>
        <button className="h-[9px] px-2">Layout1</button>
        <button aria-label="New layout" className="px-1"><Svg className="size-[5px]"><path d="M8 1v14M1 8h14" strokeWidth="2.5" /></Svg></button>
      </nav>
      <div className="flex h-[14px] shrink-0 items-center pl-[179px] pr-0.5 text-[#d3d8df]">
        <div className="flex h-3 flex-1 items-center justify-between bg-[#343d4b]">
          <span className="whitespace-nowrap pl-0.5">OSNAPZ: 0 | Ins Units: Unitless</span>
          <div className="flex">
            {statusCells.map((cell, i) => (
              <div key={i} className={clsx("flex h-[10px] items-center justify-center", cell.className)}>
                {cell.content}
              </div>
            ))}
          </div>
        </div>
      </div>
      <Taskbar />
      <div role="dialog" aria-label="Screen sharing" className="absolute bottom-6 left-1/2 flex h-5 w-[222px] -translate-x-1/2 items-center bg-white pl-[5px] text-[#4a4d51]">
        <span className="mr-1 h-[7px] w-[3px] border-x border-gray-300" />
        <span className="flex-1 whitespace-nowrap">gateway.hosted.panopto.com is sharing your screen.</span>
        <button className="h-[15px] w-12 rounded-xs bg-[#1a6be0] font-bold text-white">Stop sharing</button>
        <a href="#" className="px-[5px] text-[#5b8fe6]">Hide</a>
      </div>
    </div>
  );
}
